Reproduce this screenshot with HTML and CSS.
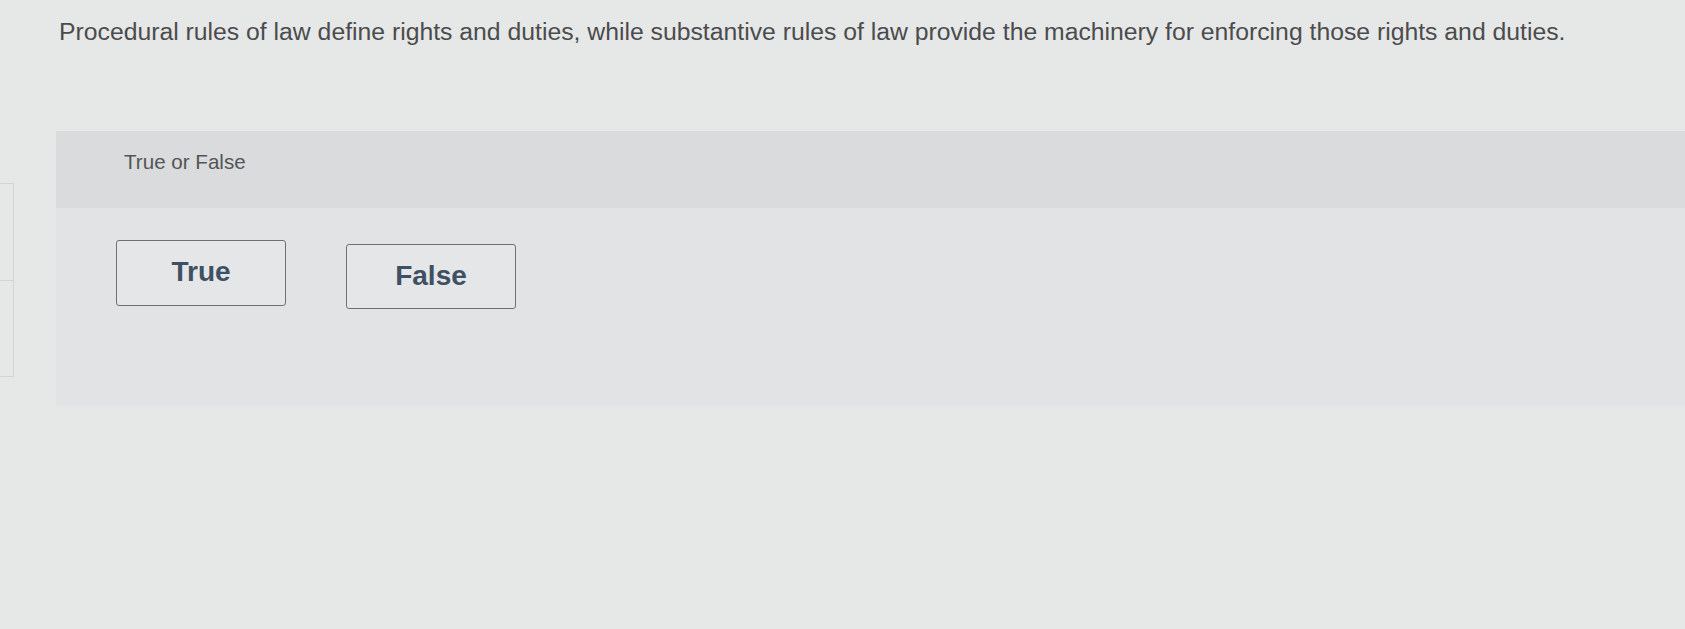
FILE: index.html
```html
<!DOCTYPE html>
<html lang="en">
<head>
<meta charset="utf-8">
<title>True or False</title>
<link rel="stylesheet" href="styles.css">
</head>
<body>
<div class="page">
  <aside class="edge">
    <div class="edge-box"><div class="edge-cell"></div><div class="edge-cell"></div></div>
  </aside>
  <main class="main">
    <p class="question">Procedural rules of law define rights and duties, while substantive rules of law provide the machinery for enforcing those rights and duties.</p>
    <section class="panel">
      <div class="panel-head">True or False</div>
      <div class="panel-body">
        <button class="choice">True</button>
        <button class="choice choice-b">False</button>
      </div>
    </section>
  </main>
</div>
</body>
</html>
```
FILE: styles.css
```css
html, body {
  margin: 0;
  padding: 0;
  height: 100%;
}
body {
  background: #e6e7e7;
  font-family: "Liberation Sans", Arial, sans-serif;
  overflow: hidden;
}
.page {
  display: flex;
  height: 629px;
}
.edge {
  width: 56px;
  flex: none;
  padding-top: 183px;
}
.edge-box {
  width: 13px;
  height: 192px;
  border: 1px solid #d2d4d5;
  border-left: none;
  display: flex;
  flex-direction: column;
}
.edge-cell {
  flex: 1;
}
.edge-cell + .edge-cell {
  border-top: 1px solid #d2d4d5;
}
.main {
  flex: 1;
  display: flex;
  flex-direction: column;
}
.question {
  margin: 0;
  padding: 18px 0 0 3px;
  font-size: 24.75px;
  line-height: 28px;
  color: #4b4c4d;
  white-space: nowrap;
}
.panel {
  margin-top: 85px;
  height: 275px;
  background: #e1e3e4;
  display: flex;
  flex-direction: column;
}
.panel-head {
  height: 77px;
  box-sizing: border-box;
  background: #d9dbdc;
  padding: 19px 0 0 68px;
  font-size: 20.6px;
  line-height: 24px;
  color: #545556;
}
.panel-body {
  display: flex;
  align-items: flex-start;
  gap: 60px;
  padding: 32px 0 0 60px;
}
.choice {
  width: 170px;
  height: 66px;
  box-sizing: border-box;
  border: 1.5px solid #6e7173;
  border-radius: 3px;
  background: #e4e6e7;
  font-family: "Liberation Sans", Arial, sans-serif;
  font-weight: bold;
  font-size: 28px;
  color: #3f5064;
  padding: 0 0 2px 0;
}
.choice-b {
  margin-top: 4px;
  height: 65px;
}
```
